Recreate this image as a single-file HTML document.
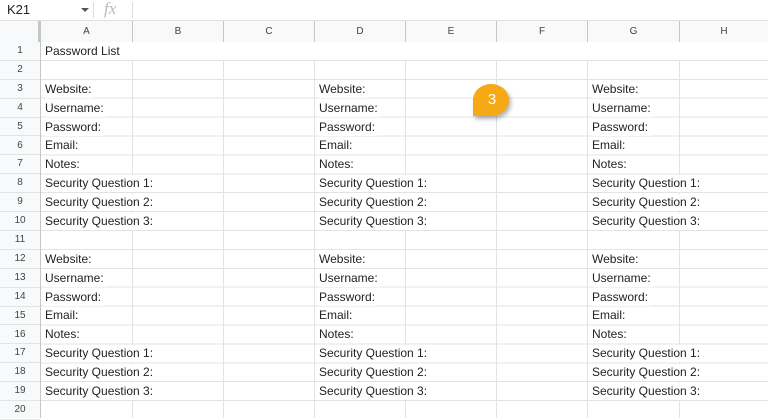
<!DOCTYPE html>
<html><head><style>
body{margin:0;width:768px;height:418px;overflow:hidden;background:#fff;font-family:"Liberation Sans",Arial,sans-serif;position:relative}
.fb{position:absolute;left:0;top:0;width:768px;height:20px;background:#fff;border-bottom:1px solid #e0e0e0}
.grid{position:absolute;left:41px;top:42px;width:727px;height:376px;
background-image:repeating-linear-gradient(to bottom,transparent 0,transparent 17.9px,#e2e3e3 17.9px,#e2e3e3 18.9px);}
.v{position:absolute;top:61px;bottom:0;width:1px;background:#e2e3e3}
.ch{position:absolute;left:0;top:21px;width:768px;height:21px;background:#f8f9fa;border-bottom:1px solid #c4c7c5}
.chc{position:absolute;top:0;height:21px;line-height:21px;text-align:center;font-size:10px;color:#444;border-right:1px solid #c4c7c5;box-sizing:border-box}
.rh{position:absolute;left:0;top:42px;width:40px;height:376px;background:#f8f9fa;border-right:1px solid #c4c7c5}
.rn{position:absolute;left:0;width:40px;text-align:center;font-size:10px;color:#444;height:18.9px;line-height:18.9px;border-bottom:1px solid #e2e3e3;box-sizing:border-box}
.t{position:absolute;font-size:12px;line-height:17px;height:17px;color:#222;background:#fff;padding-right:2px;white-space:nowrap}
</style></head><body>
<div class="fb">
<div style="position:absolute;left:7px;top:2px;font-size:13px;color:#222">K21</div>
<div style="position:absolute;left:81px;top:8px;width:0;height:0;border-left:4px solid transparent;border-right:4px solid transparent;border-top:4px solid #555"></div>
<div style="position:absolute;left:93px;top:2px;width:1px;height:16px;background:#ddd"></div>
<div style="position:absolute;left:104px;top:-1px;font-family:'Liberation Serif',serif;font-style:italic;font-size:17px;color:#bbb">fx</div>
<div style="position:absolute;left:132px;top:2px;width:1px;height:16px;background:#ddd"></div>
</div>
<div class="grid"></div>
<div class="v" style="left:132px"></div><div class="v" style="left:223px"></div><div class="v" style="left:314px"></div><div class="v" style="left:405px"></div><div class="v" style="left:496px"></div><div class="v" style="left:587px"></div><div class="v" style="left:679px"></div>
<div class="ch">
<div class="chc" style="left:0;width:41px;border-right:3px solid #c4c7c5"></div>
<div class="chc" style="left:41px;width:92px">A</div>
<div class="chc" style="left:133px;width:91px">B</div>
<div class="chc" style="left:224px;width:91px">C</div>
<div class="chc" style="left:315px;width:91px">D</div>
<div class="chc" style="left:406px;width:91px">E</div>
<div class="chc" style="left:497px;width:91px">F</div>
<div class="chc" style="left:588px;width:92px">G</div>
<div class="chc" style="left:680px;width:88px;border-right:none">H</div>
</div>
<div class="rh">
<div class="rn" style="top:0">1</div><div class="rn" style="top:18.9px">2</div><div class="rn" style="top:37.8px">3</div><div class="rn" style="top:56.7px">4</div><div class="rn" style="top:75.6px">5</div><div class="rn" style="top:94.5px">6</div><div class="rn" style="top:113.4px">7</div><div class="rn" style="top:132.3px">8</div><div class="rn" style="top:151.2px">9</div><div class="rn" style="top:170.1px">10</div><div class="rn" style="top:189px">11</div><div class="rn" style="top:207.9px">12</div><div class="rn" style="top:226.8px">13</div><div class="rn" style="top:245.7px">14</div><div class="rn" style="top:264.6px">15</div><div class="rn" style="top:283.5px">16</div><div class="rn" style="top:302.4px">17</div><div class="rn" style="top:321.3px">18</div><div class="rn" style="top:340.2px">19</div><div class="rn" style="top:359.1px">20</div>
</div>
<div style="position:absolute;left:41px;top:42px;width:727px;height:18px;background:#fff"></div>
<div class="t" style="left:45px;top:43px">Password List</div>

<div class="t" style="left:45px;top:81px">Website:</div><div class="t" style="left:45px;top:100px">Username:</div><div class="t" style="left:45px;top:119px">Password:</div><div class="t" style="left:45px;top:137px">Email:</div><div class="t" style="left:45px;top:156px">Notes:</div><div class="t" style="left:45px;top:175px">Security Question 1:</div><div class="t" style="left:45px;top:194px">Security Question 2:</div><div class="t" style="left:45px;top:213px">Security Question 3:</div>
<div class="t" style="left:319px;top:81px">Website:</div><div class="t" style="left:319px;top:100px">Username:</div><div class="t" style="left:319px;top:119px">Password:</div><div class="t" style="left:319px;top:137px">Email:</div><div class="t" style="left:319px;top:156px">Notes:</div><div class="t" style="left:319px;top:175px">Security Question 1:</div><div class="t" style="left:319px;top:194px">Security Question 2:</div><div class="t" style="left:319px;top:213px">Security Question 3:</div>
<div class="t" style="left:592px;top:81px">Website:</div><div class="t" style="left:592px;top:100px">Username:</div><div class="t" style="left:592px;top:119px">Password:</div><div class="t" style="left:592px;top:137px">Email:</div><div class="t" style="left:592px;top:156px">Notes:</div><div class="t" style="left:592px;top:175px">Security Question 1:</div><div class="t" style="left:592px;top:194px">Security Question 2:</div><div class="t" style="left:592px;top:213px">Security Question 3:</div>

<div class="t" style="left:45px;top:251px">Website:</div><div class="t" style="left:45px;top:270px">Username:</div><div class="t" style="left:45px;top:289px">Password:</div><div class="t" style="left:45px;top:307px">Email:</div><div class="t" style="left:45px;top:326px">Notes:</div><div class="t" style="left:45px;top:345px">Security Question 1:</div><div class="t" style="left:45px;top:364px">Security Question 2:</div><div class="t" style="left:45px;top:383px">Security Question 3:</div>
<div class="t" style="left:319px;top:251px">Website:</div><div class="t" style="left:319px;top:270px">Username:</div><div class="t" style="left:319px;top:289px">Password:</div><div class="t" style="left:319px;top:307px">Email:</div><div class="t" style="left:319px;top:326px">Notes:</div><div class="t" style="left:319px;top:345px">Security Question 1:</div><div class="t" style="left:319px;top:364px">Security Question 2:</div><div class="t" style="left:319px;top:383px">Security Question 3:</div>
<div class="t" style="left:592px;top:251px">Website:</div><div class="t" style="left:592px;top:270px">Username:</div><div class="t" style="left:592px;top:289px">Password:</div><div class="t" style="left:592px;top:307px">Email:</div><div class="t" style="left:592px;top:326px">Notes:</div><div class="t" style="left:592px;top:345px">Security Question 1:</div><div class="t" style="left:592px;top:364px">Security Question 2:</div><div class="t" style="left:592px;top:383px">Security Question 3:</div>

<div style="position:absolute;left:473px;top:84px;width:36px;height:32px;background:#f5a915;border-radius:50% 50% 50% 0;box-shadow:2px 3px 4px rgba(0,0,0,.3)"></div>
<div style="position:absolute;left:480px;top:90px;width:24px;text-align:center;color:#fff;font-size:15px;line-height:20px">3</div>
</body></html>
